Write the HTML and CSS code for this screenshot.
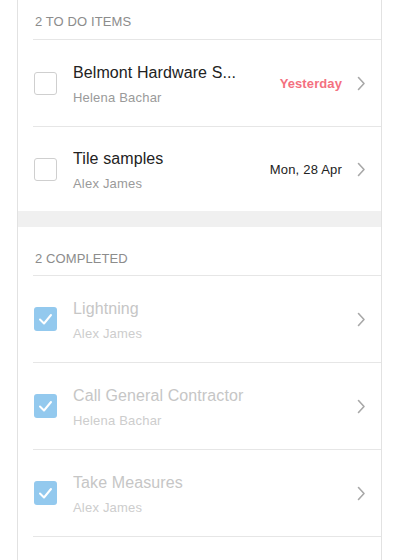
FILE: index.html
```html
<!DOCTYPE html>
<html>
<head>
<meta charset="utf-8">
<title>To do</title>
<link rel="stylesheet" href="styles.css">
</head>
<body>
<div class="card">
  <div class="section-head first">2 TO DO ITEMS</div>
  <div class="list">
    <div class="row">
      <span class="box"></span>
      <div class="text">
        <div class="title">Belmont Hardware S...</div>
        <div class="sub">Helena Bachar</div>
      </div>
      <span class="date late">Yesterday</span>
      <svg class="chev" width="9" height="15" viewBox="0 0 9 15"><polyline points="1.5,1.5 7,7.5 1.5,13.5" fill="none" stroke="#a8a8a8" stroke-width="1.6" stroke-linecap="round" stroke-linejoin="round"/></svg>
    </div>
    <div class="row last">
      <span class="box"></span>
      <div class="text">
        <div class="title">Tile samples</div>
        <div class="sub">Alex James</div>
      </div>
      <span class="date">Mon, 28 Apr</span>
      <svg class="chev" width="9" height="15" viewBox="0 0 9 15"><polyline points="1.5,1.5 7,7.5 1.5,13.5" fill="none" stroke="#a8a8a8" stroke-width="1.6" stroke-linecap="round" stroke-linejoin="round"/></svg>
    </div>
  </div>

  <div class="band"></div>

  <div class="section-head">2 COMPLETED</div>
  <div class="list done">
    <div class="row">
      <span class="box checked"><svg width="23" height="24" viewBox="0 0 23 24"><polyline points="6,12.5 10,16.5 17,8" fill="none" stroke="#fff" stroke-width="2" stroke-linecap="round" stroke-linejoin="round"/></svg></span>
      <div class="text">
        <div class="title">Lightning</div>
        <div class="sub">Alex James</div>
      </div>
      <svg class="chev" width="9" height="15" viewBox="0 0 9 15"><polyline points="1.5,1.5 7,7.5 1.5,13.5" fill="none" stroke="#a8a8a8" stroke-width="1.6" stroke-linecap="round" stroke-linejoin="round"/></svg>
    </div>
    <div class="row">
      <span class="box checked"><svg width="23" height="24" viewBox="0 0 23 24"><polyline points="6,12.5 10,16.5 17,8" fill="none" stroke="#fff" stroke-width="2" stroke-linecap="round" stroke-linejoin="round"/></svg></span>
      <div class="text">
        <div class="title">Call General Contractor</div>
        <div class="sub">Helena Bachar</div>
      </div>
      <svg class="chev" width="9" height="15" viewBox="0 0 9 15"><polyline points="1.5,1.5 7,7.5 1.5,13.5" fill="none" stroke="#a8a8a8" stroke-width="1.6" stroke-linecap="round" stroke-linejoin="round"/></svg>
    </div>
    <div class="row">
      <span class="box checked"><svg width="23" height="24" viewBox="0 0 23 24"><polyline points="6,12.5 10,16.5 17,8" fill="none" stroke="#fff" stroke-width="2" stroke-linecap="round" stroke-linejoin="round"/></svg></span>
      <div class="text">
        <div class="title">Take Measures</div>
        <div class="sub">Alex James</div>
      </div>
      <svg class="chev" width="9" height="15" viewBox="0 0 9 15"><polyline points="1.5,1.5 7,7.5 1.5,13.5" fill="none" stroke="#a8a8a8" stroke-width="1.6" stroke-linecap="round" stroke-linejoin="round"/></svg>
    </div>
    <div class="row"></div>
  </div>
</div>
</body>
</html>
```
FILE: styles.css
```css
body { margin: 0; background: #fff; font-family: "Liberation Sans", Arial, sans-serif; }

.card { margin-left: 17px; width: 363px; height: 560px; overflow: hidden; border-left: 1px solid #e2e2e2; border-right: 1px solid #e2e2e2; background: #fff; }

.section-head { height: 48px; box-sizing: border-box; padding: 0 0 9px 17px; display: flex; align-items: flex-end; font-size: 13px; color: #8c8c8c; letter-spacing: 0.1px; }
.section-head.first { height: 39px; padding-bottom: 10px; }

.list { margin-left: 15px; }
.row { height: 87px; box-sizing: border-box; border-top: 1px solid #e6e6e6; display: flex; align-items: center; padding-right: 15px; }
.row.last { height: 85px; }

.box { width: 23px; height: 23px; box-sizing: border-box; margin-left: 1px; border: 1px solid #cfcfcf; border-radius: 3px; flex: none; }
.box.checked { border: none; background: #93c9ee; height: 24px; }
.box svg { display: block; }

.text { flex: 1; margin-left: 16px; margin-top: 2px; min-width: 0; }
.title { font-size: 16px; line-height: 22px; color: #222; white-space: nowrap; overflow: hidden; letter-spacing: 0.1px; }
.sub { font-size: 13px; line-height: 16px; margin-top: 6px; color: #9a9a9a; letter-spacing: 0.2px; }

.done .title { color: #c6c6c6; }
.done .sub { color: #cdcdcd; }

.date { font-size: 13px; color: #222; margin-left: 10px; letter-spacing: 0.2px; }
.date.late { color: #f4707f; font-weight: bold; letter-spacing: 0.1px; }

.chev { flex: none; margin-left: 15px; display: block; }

.band { height: 16px; background: #f0f0f0; }
```
